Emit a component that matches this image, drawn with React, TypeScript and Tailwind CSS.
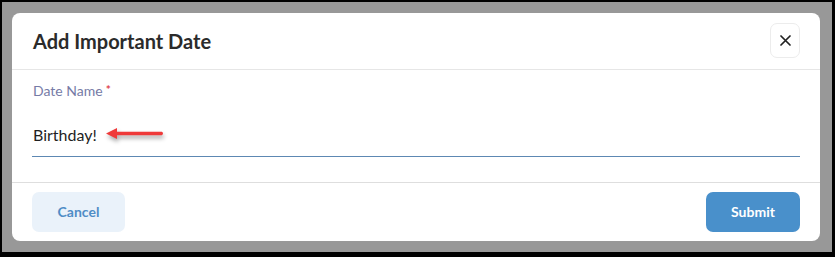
import React from "react";

export default function App() {
  return (
    <div
      className="w-[835px] h-[257px] border-t-2 border-l-2 border-r-[3px] border-b-[5px] border-black bg-[#989898] pt-[11px] pl-[10px] pr-[12px] pb-[11px]"
      style={{ fontFamily: "Lato, 'Open Sans', sans-serif" }}
    >
      <div className="w-[808px] h-[228px] bg-white rounded-[8px] flex flex-col">
        {/* Header */}
        <div className="h-[57px] flex items-center justify-between pl-[21px] pr-5 border-b border-[#e6e6e6]">
          <h2 className="text-[20px] font-bold text-[#2b2b2b] leading-none">Add Important Date</h2>
          <button className="w-[30px] h-[35px] rounded-[7px] border border-[#ececec] flex items-center justify-center mt-[-2px]">
            <svg width="11" height="11" viewBox="0 0 11 11">
              <path d="M1 1L10 10M10 1L1 10" stroke="#222" strokeWidth="1.7" strokeLinecap="round" />
            </svg>
          </button>
        </div>
        {/* Body */}
        <div className="h-[113px] pl-5 pr-5 pt-[12px] border-b border-[#dedede]">
          <div className="text-[14px] text-[#767ba6] leading-[18px] pl-px">
            Date Name<span className="relative top-[-2px] text-[#e0444b] text-[12px] font-bold ml-[3px]">*</span>
          </div>
          <div className="relative mt-[22px] h-[34px] border-b border-[#5d88b3] pl-px">
            <span className="text-[16px] text-[#1f1f1f] leading-[20px]">Birthday!</span>
            <svg
              className="absolute left-[73px] top-[1px]"
              width="64"
              height="22"
              viewBox="0 0 64 22"
              style={{ filter: "drop-shadow(1px 3px 2px rgba(0,0,0,0.35))" }}
            >
              <path d="M1 9.5 L12 4 L12 7.8 L57 7.8 Q59 9.5 57 11.2 L12 11.2 L12 15 Z" fill="#ef3a3a" />
            </svg>
          </div>
        </div>
        {/* Footer */}
        <div className="flex-1 flex items-center justify-between px-5 pb-px">
          <button className="w-[93px] h-[40px] rounded-[7px] bg-[#eaf2fa] text-[#4f8dc6] text-[14px] font-bold">
            Cancel
          </button>
          <button className="w-[94px] h-[40px] rounded-[7px] bg-[#4990cb] text-white text-[14px] font-bold">
            Submit
          </button>
        </div>
      </div>
    </div>
  );
}
